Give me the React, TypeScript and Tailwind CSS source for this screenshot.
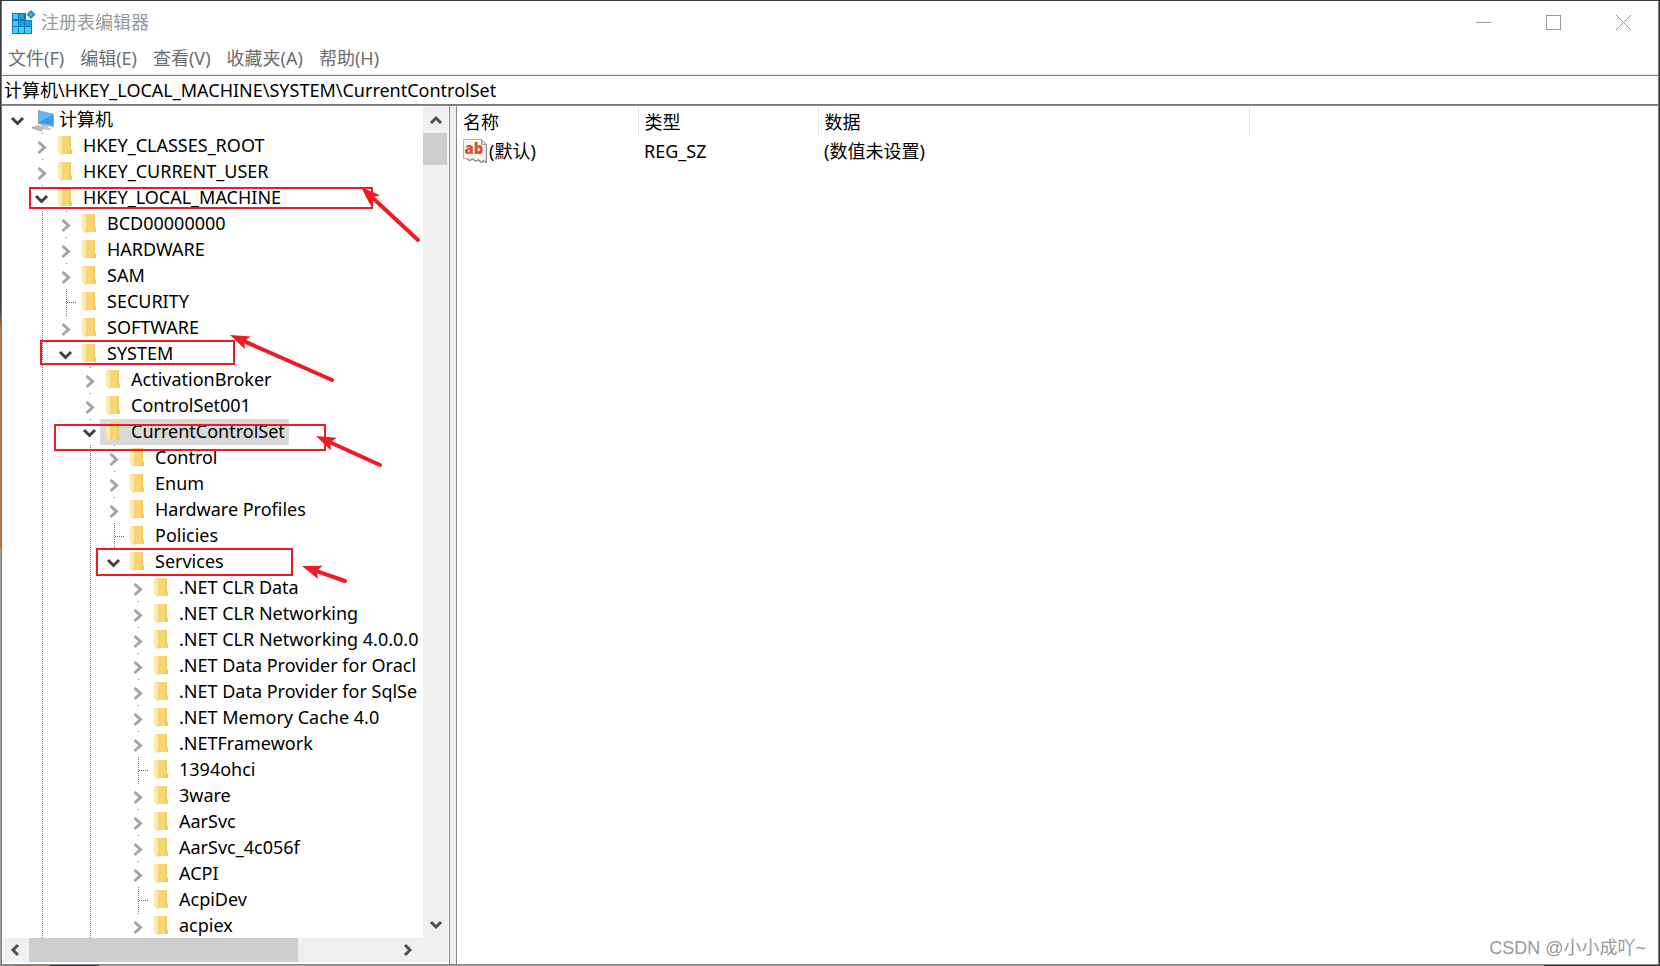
import clsx from "clsx";

interface ITreeNode {
  label: string;
  level: number;
  state: "open" | "closed" | "leaf";
  // indent columns that carry a dotted line through this row
  guides?: number[];
  selected?: boolean;
}

const nodes: ITreeNode[] = [
  { label: "计算机", level: 0, state: "open" },
  { label: "HKEY_CLASSES_ROOT", level: 1, state: "closed" },
  { label: "HKEY_CURRENT_USER", level: 1, state: "closed" },
  { label: "HKEY_LOCAL_MACHINE", level: 1, state: "open" },
  { label: "BCD00000000", level: 2, state: "closed", guides: [1] },
  { label: "HARDWARE", level: 2, state: "closed", guides: [1] },
  { label: "SAM", level: 2, state: "closed", guides: [1] },
  { label: "SECURITY", level: 2, state: "leaf", guides: [1] },
  { label: "SOFTWARE", level: 2, state: "closed", guides: [1] },
  { label: "SYSTEM", level: 2, state: "open", guides: [1] },
  { label: "ActivationBroker", level: 3, state: "closed", guides: [1] },
  { label: "ControlSet001", level: 3, state: "closed", guides: [1] },
  { label: "CurrentControlSet", level: 3, state: "open", guides: [1], selected: true },
  { label: "Control", level: 4, state: "closed", guides: [1, 3] },
  { label: "Enum", level: 4, state: "closed", guides: [1, 3] },
  { label: "Hardware Profiles", level: 4, state: "closed", guides: [1, 3] },
  { label: "Policies", level: 4, state: "leaf", guides: [1, 3] },
  { label: "Services", level: 4, state: "open", guides: [1, 3] },
  { label: ".NET CLR Data", level: 5, state: "closed", guides: [1, 3] },
  { label: ".NET CLR Networking", level: 5, state: "closed", guides: [1, 3] },
  { label: ".NET CLR Networking 4.0.0.0", level: 5, state: "closed", guides: [1, 3] },
  { label: ".NET Data Provider for Oracl", level: 5, state: "closed", guides: [1, 3] },
  { label: ".NET Data Provider for SqlSe", level: 5, state: "closed", guides: [1, 3] },
  { label: ".NET Memory Cache 4.0", level: 5, state: "closed", guides: [1, 3] },
  { label: ".NETFramework", level: 5, state: "closed", guides: [1, 3] },
  { label: "1394ohci", level: 5, state: "leaf", guides: [1, 3] },
  { label: "3ware", level: 5, state: "closed", guides: [1, 3] },
  { label: "AarSvc", level: 5, state: "closed", guides: [1, 3] },
  { label: "AarSvc_4c056f", level: 5, state: "closed", guides: [1, 3] },
  { label: "ACPI", level: 5, state: "closed", guides: [1, 3] },
  { label: "AcpiDev", level: 5, state: "leaf", guides: [1, 3] },
  { label: "acpiex", level: 5, state: "closed", guides: [1, 3] },
];

const menus = ["文件(F)", "编辑(E)", "查看(V)", "收藏夹(A)", "帮助(H)"];

const RegeditIcon = () => (
  <svg width="24" height="24" viewBox="0 0 24 24" className="shrink-0">
    <path d="M0 3h14v7h6v14H0z" fill="#0a7cb8" />
    <path d="M1 4h5v5H1zM1 11h5v5H1zM7 17h5v6H7zM1 17h5v6H1zM13 17h6v6h-6z" fill="#4cc8fa" />
    <path d="M7 4h5v5H7zM7 11h5v5H7zM13 11h6v5h-6z" fill="#12a5df" />
    <path d="M19 0l4.500 4.500L19 9l-4.500-4.500z" fill="#2488bd" />
    <path d="M19 2.500l2 2-2 2-2-2z" fill="#4fb4e0" />
  </svg>
);

const ComputerIcon = () => (
  <svg width="28" height="26" viewBox="0 0 28 26">
    <path d="M10 3l16 4v13l-16-3z" fill="#8fa6b5" />
    <path d="M11 4.500l14 3.500v10l-14-2.500z" fill="#2f9fee" />
    <path d="M11 4.500l14 3.500-14 7z" fill="#5bbcfb" />
    <path d="M14 17.500l6 1.200v2l4 1-3 1.500-9-2z" fill="#b9c3ca" />
    <path d="M4 20l6-2 10 2.500-6 3z" fill="#c9d0d5" />
    <path d="M4 20l10 3.500v.8L4 21zM8 19l9 2.500M6.500 19.500l9 2.700" fill="#8d979e" stroke="#9aa4ab" strokeWidth=".6" />
  </svg>
);

const FolderIcon = () => (
  <svg width="28" height="26" viewBox="0 0 28 26">
    <path d="M8 3h11v13l1 1v4H8z" fill="#f7d774" />
    <path d="M17 3h2v13l1 1v4h-3z" fill="#f3cd64" />
    <path d="M6 3h2l3 3v12l-1 4.500L6 19z" fill="#ffe9a6" />
    <path d="M11 6v12l-1 4" fill="none" stroke="#ecc662" strokeWidth=".8" />
  </svg>
);

const StringValueIcon = () => (
  <svg width="24" height="24" viewBox="0 0 24 24" className="shrink-0">
    <path d="M.5.500h18l5 5v18l-3-1.500-2 1.500-3-2.500-3 1-3-2-3 1.500-3-2H.5z" fill="#f4f4f4" stroke="#b5b5b5" />
    <path d="M23.500 5.500v18l-3-1.500-2 1.500-3-2.500-3 1-3-2-3 1.500-3-2" fill="none" stroke="#8f8f8f" strokeWidth="1.500" />
    <path d="M18.500.500v5h5z" fill="#d5d5d5" stroke="#9d9d9d" />
    <text x="11" y="15" textAnchor="middle" fontFamily="Open Sans" fontSize="15" fontWeight="800" fill="#d9532c">
      ab
    </text>
  </svg>
);

const dotsDown = "bg-[repeating-linear-gradient(to_bottom,#707070_0_1px,transparent_1px_2px)]";
const dotsAcross = "bg-[repeating-linear-gradient(to_right,#707070_0_1px,transparent_1px_2px)]";

const Expander = ({ state, root }: { state: ITreeNode["state"]; root: boolean }) => {
  if (state === "leaf") {
    return (
      <span className="flex h-full w-6 shrink-0 items-center pl-3.5">
        <span className={clsx("h-full w-px", dotsDown)} />
        <span className={clsx("h-px flex-1", dotsAcross)} />
      </span>
    );
  }
  return (
    <button type="button" aria-label={state === "open" ? "折叠" : "展开"} className="h-full w-6 shrink-0">
      <svg width="24" height="26" viewBox="0 0 24 26" fill="none" strokeWidth="3">
        {!root && <path d="M14 .5h1" stroke="#707070" strokeWidth="1" />}
        {state === "open" ? (
          <path d="M8 11l5.500 5.500L19 11" stroke="#404040" />
        ) : (
          <path d="M10.500 9l6 5.500-6 5.500" stroke="#a3a3a3" />
        )}
      </svg>
    </button>
  );
};

const TreeRow = ({ node: { label, level, state, guides = [], selected } }: { node: ITreeNode }) => (
  <li role="treeitem" aria-level={level + 1} aria-selected={!!selected} className="flex h-[26px] shrink-0 items-center">
    {Array.from({ length: level }, (_, i) => (
      <span key={i} className="flex h-full w-6 shrink-0 pl-3.5">
        {guides.includes(i) && <span className={clsx("h-full w-px", dotsDown)} />}
      </span>
    ))}
    <Expander state={state} root={level === 0} />
    <span className={clsx("flex h-full items-center pr-1 whitespace-nowrap", selected && "bg-[#d9d9d9]")}>
      {level === 0 ? <ComputerIcon /> : <FolderIcon />}
      <span className="pb-0.5 pl-[3px]">{label}</span>
    </span>
  </li>
);

const ScrollArrow = ({ label, d }: { label: string; d: string }) => (
  <button type="button" aria-label={label} className="flex size-[26px] shrink-0 items-center justify-center">
    <svg width="14" height="14" viewBox="0 0 14 14" fill="none" stroke="#505050" strokeWidth="3">
      <path d={d} />
    </svg>
  </button>
);

const TreePane = () => (
  <section className="flex w-[448px] shrink-0 flex-col border-r border-[#828790] pt-px pr-px pb-0.5 pl-px">
    <div className="flex min-h-0 flex-1">
      <ul role="tree" className="flex min-w-0 flex-1 flex-col overflow-hidden pl-px">
        {nodes.map((node) => (
          <TreeRow key={node.label} node={node} />
        ))}
      </ul>
      <div className="flex w-[25px] shrink-0 flex-col bg-[#f0f0f0]">
        <ScrollArrow label="向上滚动" d="M2 10l5-5 5 5" />
        <div className="h-8 w-6 bg-[#cdcdcd]" />
        <div className="flex-1" />
        <ScrollArrow label="向下滚动" d="M2 4l5 5 5-5" />
      </div>
    </div>
    <div className="flex h-6 items-center bg-[#f0f0f0] pr-7">
      <ScrollArrow label="向左滚动" d="M9 2L4 7l5 5" />
      <div className="h-full w-[269px] bg-[#cdcdcd]" />
      <div className="flex-1" />
      <ScrollArrow label="向右滚动" d="M5 2l5 5-5 5" />
    </div>
  </section>
);

const ValuePane = () => (
  <section className="min-w-0 flex-1 overflow-hidden border-l border-[#828790] pt-px">
    <table className="w-[793px] table-fixed text-left">
      <thead>
        <tr className="h-[30px]">
          <th className="w-[181px] border-r border-[#e5e5e5] pl-1.5 font-normal">名称</th>
          <th className="w-[180px] border-r border-[#e5e5e5] pl-1.5 font-normal">类型</th>
          <th className="border-r border-[#e5e5e5] pl-1.5 font-normal">数据</th>
        </tr>
      </thead>
      <tbody>
        <tr className="h-7">
          <td className="pl-1.5">
            <span className="flex items-center gap-0.5">
              <StringValueIcon />
              (默认)
            </span>
          </td>
          <td className="pl-1.5">REG_SZ</td>
          <td className="pl-1.5">(数值未设置)</td>
        </tr>
      </tbody>
    </table>
  </section>
);

const boxes = [
  { x: 30, y: 187, width: 342, height: 20 },
  { x: 41, y: 340, width: 193, height: 23 },
  { x: 55, y: 424, width: 270, height: 25 },
  { x: 97, y: 548, width: 195, height: 26 },
];

// [tip x, tip y, tail x, tail y]
const arrows = [
  [361, 186, 418, 239],
  [230, 334, 332, 379],
  [316, 435, 380, 464],
  [302, 565, 345, 580],
];

const Annotations = () => (
  <svg width="450" height="600" className="pointer-events-none absolute top-0 left-0" fill="none" stroke="#ed1c24">
    {boxes.map((box) => (
      <rect key={box.y} {...box} strokeWidth="2" />
    ))}
    {arrows.map(([x1, y1, x2, y2]) => {
      const length = Math.hypot(x2 - x1, y2 - y1);
      const angle = (Math.atan2(y2 - y1, x2 - x1) * 180) / Math.PI;
      return (
        <g key={x1} transform={`translate(${x1} ${y1}) rotate(${angle})`}>
          <path d="M0 0l19.500-7-4 7 4 7z" fill="#ed1c24" stroke="none" />
          <path d={`M14 0H${length}`} strokeWidth="4" strokeLinecap="round" />
        </g>
      );
    })}
  </svg>
);

const App = () => {
  return (
    <div className="relative flex h-screen flex-col overflow-hidden border-t border-[#38383a] bg-[linear-gradient(to_right,#8c8c8c_15px,#b06a45_15px_50px,#38383f_50px_99px,#a0a0a0_99px_93%,#38383a_93%)] pr-px pb-px font-['Noto_Sans','Noto_Sans_CJK_SC',sans-serif] text-[18px] leading-6 text-black">
      <div className="flex min-h-0 flex-1 bg-[linear-gradient(to_bottom,#38383f_306px,#b9784f_330px_548px,#a0a0a0_548px)] pl-px">
        <main className="flex min-w-0 flex-1 flex-col border-x border-[#7a7a7a] bg-white">
          <header className="flex h-[42px] shrink-0 items-center pl-2.5">
            <RegeditIcon />
            <h1 className="flex-1 pl-[5px] text-[#999]">注册表编辑器</h1>
            <div className="flex">
              <button type="button" aria-label="最小化" className="flex h-[42px] w-[70px] items-center justify-center">
                <span className="h-px w-[15px] bg-[#999]" />
              </button>
              <button type="button" aria-label="最大化" className="flex h-[42px] w-[70px] items-center justify-center">
                <span className="size-[15px] border border-[#999]" />
              </button>
              <button type="button" aria-label="关闭" className="flex h-[42px] w-[70px] items-center justify-center">
                <svg width="15" height="15" viewBox="0 0 15 15" stroke="#999">
                  <path d="M0 0l15 15M15 0L0 15" />
                </svg>
              </button>
            </div>
          </header>
          <nav className="flex h-8 shrink-0 items-center gap-4 border-b-2 border-[#f0f0f0] pl-1.5 text-[#6d6d6d]">
            {menus.map((menu) => (
              <button key={menu} type="button">
                {menu}
              </button>
            ))}
          </nav>
          <input
            aria-label="地址"
            defaultValue="计算机\HKEY_LOCAL_MACHINE\SYSTEM\CurrentControlSet"
            className="h-[30px] w-full shrink-0 border-y border-[#7a7a7a] pb-0.5 pl-0.5 outline-none"
          />
          <div className="flex min-h-0 flex-1 gap-1.5 border-y border-[#828790] bg-[#f0f0f0] *:bg-white">
            <TreePane />
            <ValuePane />
          </div>
        </main>
      </div>
      <Annotations />
      <p className="absolute right-3.5 bottom-1.5 font-['Liberation_Sans','Noto_Sans_CJK_SC',sans-serif] text-[#999]">
        CSDN @小小成吖~
      </p>
    </div>
  );
};

export default App;
